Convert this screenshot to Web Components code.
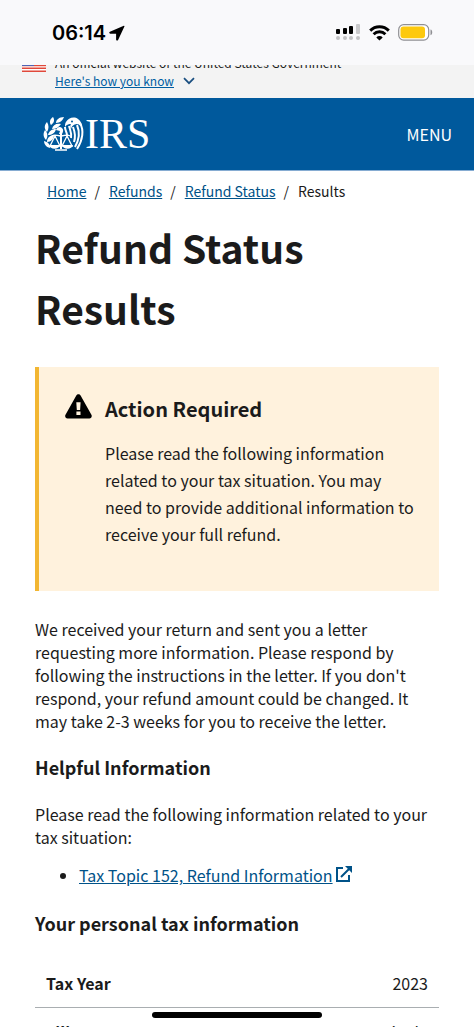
<!DOCTYPE html>
<html lang="en">
<head>
<meta charset="utf-8">
<meta name="viewport" content="width=device-width, initial-scale=1">
<title>Refund Status Results</title>
<style>
  body {
    margin: 0;
    background: #fff;
    color: #1b1b1b;
    font-family: "Noto Sans CJK SC", "Open Sans", sans-serif;
    font-size: 16px;
    line-height: 23px;
  }
</style>
</head>
<body>
<phone-screen>
  <status-bar slot="status" time="06:14"></status-bar>
  <gov-banner></gov-banner>
  <site-header></site-header>
  <bread-crumbs current="Results">
    <a href="#home">Home</a>
    <a href="#refunds">Refunds</a>
    <a href="#status">Refund Status</a>
  </bread-crumbs>
  <refund-results></refund-results>
</phone-screen>

<script>
class PhoneScreen extends HTMLElement {
    constructor() {
        super();
        this.attachShadow({mode: "open"}).innerHTML = `
            <style>
                :host {
                    display: flex;
                    flex-direction: column;
                    height: 100vh;
                    overflow: hidden;
                    position: relative;
                }
                .page {
                    flex: 1;
                    min-height: 0;
                    overflow: hidden;
                }
                /* home indicator lies over the page */
                .home {
                    position: absolute;
                    left: 32%;
                    right: 32%;
                    bottom: 9px;
                    height: 6px;
                    border-radius: 3px;
                    background: #000;
                }
            </style>
            <slot name="status"></slot>
            <div class="page"><slot></slot></div>
            <div class="home"></div>`;
    }
}

class StatusBar extends HTMLElement {
    constructor() {
        super();
        this.attachShadow({mode: "open"}).innerHTML = `
            <style>
                :host {
                    display: flex;
                    flex: none;
                    justify-content: space-between;
                    align-items: center;
                    box-sizing: border-box;
                    height: 65px;
                    padding: 0 41px 0 52px;
                    background: #f9f9fb;
                    color: #000;
                    font: 600 20px/24px Inter, sans-serif;
                }
                div {
                    display: flex;
                    align-items: center;
                    gap: 8px;
                }
                .left { gap: 3px; }
                svg { display: block; }
            </style>
            <div class="left">
                <span>${this.getAttribute("time")}</span>
                <svg width="16" height="16" viewBox="0 0 16 16"><path d="M14.800.7.9 6.800c-1.100.5-.8 1.900.4 1.900h5.800v5.800c0 1.300 1.500 1.500 2 .4L15.400 1.400c.2-.5-.1-.9-.6-.7z"/></svg>
            </div>
            <div>
                <svg width="25" height="17" viewBox="0 0 25 17">
                    <rect x="0" y="5" width="4" height="5" rx="1"/>
                    <rect x="7" y="4" width="4" height="6" rx="1"/>
                    <rect x="13" y="2" width="4" height="8" rx="1"/>
                    <rect x="20" y="0" width="4" height="10" rx="1" fill="#c9c9cb"/>
                    <g fill="#c2c2c4"><circle cx="2" cy="14" r="2"/><circle cx="9" cy="14" r="2"/><circle cx="15" cy="14" r="2"/><circle cx="22" cy="14" r="2"/></g>
                </svg>
                <svg width="21" height="16" viewBox="0 0 21 16">
                    <g fill="none" stroke="#000" stroke-width="2.900"><path d="M1.200 5.600a13.200 13.200 0 0 1 18.600 0"/><path d="M4.600 9.200a8.400 8.400 0 0 1 11.800 0"/></g>
                    <path d="M10.500 15.600 7.300 12.400a4.600 4.600 0 0 1 6.400 0z"/>
                </svg>
                <svg width="35" height="17" viewBox="0 0 35 17">
                    <rect x=".7" y=".7" width="30" height="15.400" rx="5" fill="#fff" stroke="#8f8f93" stroke-width="1.200"/>
                    <rect x="2.500" y="2.500" width="24.500" height="11.800" rx="3" fill="#fdc90d"/>
                    <path d="M32.500 5.600c2.300.5 2.300 5.200 0 5.700z" fill="#8f8f93"/>
                </svg>
            </div>`;
    }
}

class GovBanner extends HTMLElement {
    constructor() {
        super();
        this.attachShadow({mode: "open"}).innerHTML = `
            <style>
                /* scrolled half out of view, so the content hangs from the bottom edge */
                :host {
                    display: flex;
                    align-items: flex-end;
                    gap: 9px;
                    box-sizing: border-box;
                    height: 33px;
                    padding: 0 22px 8px;
                    overflow: hidden;
                    background: #f3f3f3;
                    font-size: 12px;
                    line-height: 18px;
                }
                svg { display: block; flex: none; }
                .flag { margin-bottom: 18px; }
                p { margin: 0; }
                button {
                    display: flex;
                    align-items: center;
                    gap: 9px;
                    padding: 0;
                    border: 0;
                    background: none;
                    color: #005ea2;
                    font: inherit;
                }
                button span { text-decoration: underline; }
            </style>
            <svg class="flag" width="24" height="16" viewBox="0 0 24 16">
                <path fill="#fff" d="M0 0h24v16H0z"/>
                <path stroke="#e0483a" stroke-width="1.600" d="M0 1h24M0 4h24M0 6.500h24M0 9.400h24M0 12.300h24M0 15.200h24"/>
                <path fill="#5064b4" d="M0 0h12v10H0z"/>
            </svg>
            <div>
                <p>An official website of the United States Government</p>
                <button type="button"><span>Here's how you know</span>
                    <svg width="12" height="8" viewBox="0 0 12 8"><path d="m1 1.200 5 5 5-5" fill="none" stroke="#1a4f80" stroke-width="1.700"/></svg>
                </button>
            </div>`;
    }
}

class SiteHeader extends HTMLElement {
    constructor() {
        super();
        this.attachShadow({mode: "open"}).innerHTML = `
            <style>
                :host {
                    display: flex;
                    align-items: center;
                    justify-content: space-between;
                    box-sizing: border-box;
                    height: 73px;
                    padding: 0 22px 0 43px;
                    background: #00599c;
                    border-bottom: 1px solid #86acd2;
                    color: #fff;
                }
                a {
                    display: flex;
                    align-items: center;
                    color: inherit;
                    text-decoration: none;
                    font: 42px/48px "Liberation Serif", serif;
                }
                button {
                    padding: 0;
                    border: 0;
                    background: none;
                    color: inherit;
                    font: inherit;
                }
            </style>
            <a href="#irs" aria-label="IRS">
                <svg width="42" height="38" viewBox="0 0 42 38">
                    <!-- olive branch -->
                    <g fill="#fff">
                        <path d="M13 8c0-3 3-6 8-6-1 3-4 6-8 6zM8 10C6 7 7 4 10 2c2 3 1 6-2 8zM9 14c1-4 4-6 9-5-2 3-5 5-9 5zM4 17C1 14 1 10 4 7c2 3 2 7 0 10zM5 20c1-4 4-6 8-6-1 4-4 6-8 6zM3 25c-3-3-3-7-1-10 3 3 3 7 1 10zM4 27c0-4 3-7 7-7 0 4-3 7-7 7zM7 33c-4-1-6-4-6-7 4 1 6 3 6 7z"/>
                    </g>
                    <!-- scales -->
                    <g fill="none" stroke="#fff">
                        <path stroke-width="2" d="M18 18v16"/>
                        <path stroke-width="1.300" d="M9 21c3-2 5 0 9 0s6-2 9 0M12 21 7 31h10zM24 21l-5 10h10zM12 35h12"/>
                    </g>
                    <path fill="#fff" d="M6 30h11c-1 5-10 5-11 0zM19 30h11c-1 5-10 5-11 0zM13 15c1-3 4-4 6-2s1 4 0 6h-3l1-3z"/>
                    <!-- eagle head and wing -->
                    <path fill="#fff" d="M23 7c2-4 8-6 12-3 3 2 4 5 4 8l-4-3c-3 0-6 1-7 5-1-2-1-4 0-5-2 0-4 0-6 3 0-2 0-4 1-5z"/>
                    <g fill="none" stroke="#fff" stroke-width="2">
                        <path d="M37 8c4 7 3 17-3 26M34 10c3 7 2 15-2 22M30 12c2 5 3 9 1 15M26 11c1 4 3 7 2 12M22 12c0 4 2 5 2 8"/>
                    </g>
                    <circle cx="29" cy="6.500" r="1" fill="#00599c"/>
                </svg>
                <span>IRS</span>
            </a>
            <button type="button">MENU</button>`;
    }
}

class BreadCrumbs extends HTMLElement {
    constructor() {
        super();
        this.attachShadow({mode: "open"}).innerHTML = `
            <style>
                :host { display: block; padding: 9px 22px 0 47px; font-size: 14px; }
                nav { display: flex; gap: 8px; }
                nav > span::before { content: "/"; margin-right: 9px; }
                slot { display: contents; }
                ::slotted(a) { color: #005288; }
            </style>
            <nav aria-label="Breadcrumb"></nav>`;
    }

    connectedCallback() {
        const nav = this.shadowRoot.querySelector("nav");
        [...this.querySelectorAll("a")].forEach((link, i) => {
            link.slot = "crumb" + i;
            const item = document.createElement(i ? "span" : "div");
            item.innerHTML = `<slot name="crumb${i}"></slot>`;
            nav.append(item);
        });
        const last = document.createElement("span");
        last.textContent = this.getAttribute("current");
        nav.append(last);
    }
}

class AlertBox extends HTMLElement {
    constructor() {
        super();
        this.attachShadow({mode: "open"}).innerHTML = `
            <style>
                :host {
                    display: grid;
                    grid-template-columns: 27px 1fr;
                    column-gap: 13px;
                    padding: 27px 21px 43px 26px;
                    border-left: 4px solid #f2b632;
                    background: #fff2dd;
                }
                svg { display: block; }
                h2 { margin: 0 0 16px; font-size: 20px; line-height: 30px; }
                .text { line-height: 27px; }
            </style>
            <svg width="27" height="25" viewBox="0 0 27 25">
                <path d="M11.300 1.500c1-1.700 3.300-1.700 4.300 0l10.800 19.300c.9 1.600-.1 3.600-2 3.600H2.500c-1.900 0-2.900-2-2-3.600z"/>
                <path fill="#fff2dd" d="M11.300 8.200h4.300l-.5 7.800h-3.300zM11.400 17.500h4.100V21h-4.100z"/>
            </svg>
            <div>
                <h2>${this.getAttribute("heading")}</h2>
                <div class="text"><slot></slot></div>
            </div>`;
    }
}

class RefundResults extends HTMLElement {
    constructor() {
        super();
        this.attachShadow({mode: "open"}).innerHTML = `
            <style>
                :host { display: block; padding: 14px 35px 0; }
                h1 { margin: 0 0 28px; font-size: 39px; line-height: 61px; }
                h2 { margin: 22px 0 24px; font-size: 18px; line-height: 24px; }
                p { margin: 0; }
                alert-box { margin-bottom: 27px; }
                ul { margin: 15px 0 24px; padding-left: 44px; }
                a { color: #005288; }
                table { width: 100%; border-collapse: collapse; }
                td, th { padding: 13px 11px 12px; border-bottom: 1px solid #a9aeb1; }
                th { text-align: left; }
                td { text-align: right; }
            </style>
            <h1>Refund Status Results</h1>
            <alert-box heading="Action Required">Please read the following information related to your tax situation. You may need to provide additional information to receive your full refund.</alert-box>
            <p>We received your return and sent you a letter requesting more information. Please respond by following the instructions in the letter. If you don't respond, your refund amount could be changed. It may take 2-3 weeks for you to receive the letter.</p>
            <h2>Helpful Information</h2>
            <p>Please read the following information related to your tax situation:</p>
            <ul>
                <li><a href="#topic152">Tax Topic 152, Refund Information</a>
                    <svg width="16" height="16" viewBox="0 0 16 16" fill="none" stroke="#005288" stroke-width="2"><path d="M7 2H1v13h12V9M5 11l8.500-8.500"/><path fill="#005288" stroke="none" d="M9 0h7v7z"/></svg>
                </li>
            </ul>
            <h2>Your personal tax information</h2>
            <table>
                <tr><th scope="row">Tax Year</th><td>2023</td></tr>
                <tr><th scope="row">Filing Status</th><td>Single</td></tr>
            </table>`;
    }
}

customElements.define("phone-screen", PhoneScreen);
customElements.define("status-bar", StatusBar);
customElements.define("gov-banner", GovBanner);
customElements.define("site-header", SiteHeader);
customElements.define("bread-crumbs", BreadCrumbs);
customElements.define("alert-box", AlertBox);
customElements.define("refund-results", RefundResults);
</script>
</body>
</html>
